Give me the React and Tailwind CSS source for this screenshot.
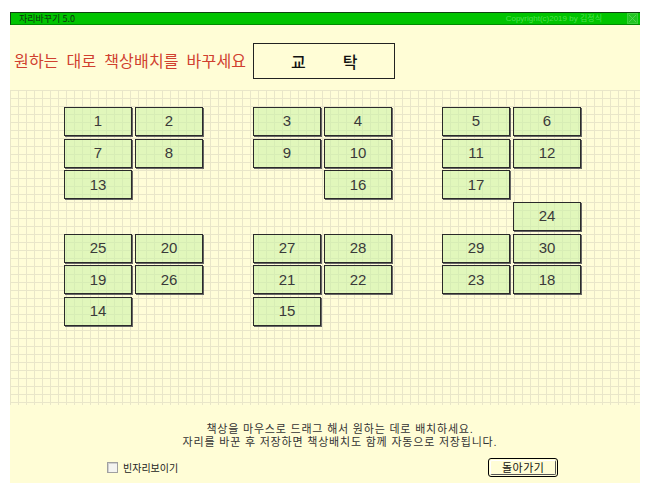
import React, { useState } from "react";

const groups = [
  [
    { n: 1, c: "col-start-1", r: "row-start-1" },
    { n: 2, c: "col-start-2", r: "row-start-1" },
    { n: 7, c: "col-start-1", r: "row-start-2" },
    { n: 8, c: "col-start-2", r: "row-start-2" },
    { n: 13, c: "col-start-1", r: "row-start-3" },
    { n: 25, c: "col-start-1", r: "row-start-5" },
    { n: 20, c: "col-start-2", r: "row-start-5" },
    { n: 19, c: "col-start-1", r: "row-start-6" },
    { n: 26, c: "col-start-2", r: "row-start-6" },
    { n: 14, c: "col-start-1", r: "row-start-7" },
  ],
  [
    { n: 3, c: "col-start-1", r: "row-start-1" },
    { n: 4, c: "col-start-2", r: "row-start-1" },
    { n: 9, c: "col-start-1", r: "row-start-2" },
    { n: 10, c: "col-start-2", r: "row-start-2" },
    { n: 16, c: "col-start-2", r: "row-start-3" },
    { n: 27, c: "col-start-1", r: "row-start-5" },
    { n: 28, c: "col-start-2", r: "row-start-5" },
    { n: 21, c: "col-start-1", r: "row-start-6" },
    { n: 22, c: "col-start-2", r: "row-start-6" },
    { n: 15, c: "col-start-1", r: "row-start-7" },
  ],
  [
    { n: 5, c: "col-start-1", r: "row-start-1" },
    { n: 6, c: "col-start-2", r: "row-start-1" },
    { n: 11, c: "col-start-1", r: "row-start-2" },
    { n: 12, c: "col-start-2", r: "row-start-2" },
    { n: 17, c: "col-start-1", r: "row-start-3" },
    { n: 24, c: "col-start-2", r: "row-start-4" },
    { n: 29, c: "col-start-1", r: "row-start-5" },
    { n: 30, c: "col-start-2", r: "row-start-5" },
    { n: 23, c: "col-start-1", r: "row-start-6" },
    { n: 18, c: "col-start-2", r: "row-start-6" },
  ],
];

function Desk({ desk }) {
  return (
    <div
      className={`${desk.c} ${desk.r} flex items-center justify-center border border-[#2a2a2a] shadow-[1px_1px_0_#666] bg-[#c8f2a4]/55 text-[15px] font-normal text-[#3a3a3a] font-['Liberation_Sans',sans-serif]`}
    >
      {desk.n}
    </div>
  );
}

export default function App() {
  const [showEmpty, setShowEmpty] = useState(false);

  return (
    <div className="w-[656px] h-[502px] bg-white pt-[12px] pl-[10px] font-['Noto_Sans_CJK_KR',sans-serif]">
      <div className="w-[630px] h-[471px] bg-[#fffdd6] flex flex-col">
        {/* title bar */}
        <div className="h-[13px] bg-[#00c400] border-t border-l border-[#104010] border-b border-b-[#008a00] flex items-center pl-[8px] pr-[2px]">
          <span className="text-[9px] leading-none text-[#103010]">자리바꾸기 5.0</span>
          <span className="ml-auto text-[8px] leading-none text-[#4ee24e] font-['Liberation_Sans','Noto_Sans_CJK_KR',sans-serif]">
            Copyright(c)2019 by 김정식
          </span>
          <div className="ml-[25px] w-[11px] h-[11px] border border-[#3ccf3c] bg-[#22c522] overflow-hidden">
            <svg viewBox="0 0 11 11" className="w-full h-full">
              <path d="M1 1L10 10M10 1L1 10" stroke="#5ad85a" strokeWidth="1" />
            </svg>
          </div>
        </div>

        {/* header */}
        <div className="h-[65px] flex items-start">
          <h1 className="mt-[27px] ml-[4px] text-[16px] leading-none tracking-[0.2px] [word-spacing:4px] text-[#d0402f]">
            원하는 대로 책상배치를 바꾸세요
          </h1>
          <div className="mt-[18px] ml-[7px] w-[142px] h-[36px] border border-[#222] flex items-center justify-center gap-[37px] text-[16px] text-[#111] font-medium">
            <span>교</span>
            <span>탁</span>
          </div>
        </div>

        {/* classroom grid */}
        <div className="h-[315px] pt-[17px] pl-[54px] flex gap-x-[50px] bg-[linear-gradient(to_right,#e9e6c9_1px,transparent_1px),linear-gradient(to_bottom,#e9e6c9_1px,transparent_1px)] bg-[length:8px_8px] bg-[#fffdd8]">
          {groups.map((g, i) => (
            <div key={i} className="grid grid-cols-[68px_68px] grid-rows-[repeat(7,29px)] gap-x-[3px] gap-y-[2.67px]">
              {g.map((d) => (
                <Desk key={d.n} desk={d} />
              ))}
            </div>
          ))}
        </div>

        {/* footer */}
        <div className="flex-1 flex flex-col">
          <div className="pt-[18px] pl-[30px] flex flex-col items-center text-[11px] leading-[12.6px] tracking-[0.8px] text-[#333] font-['Liberation_Sans','Noto_Sans_CJK_KR',sans-serif]">
            <p>책상을 마우스로 드래그 해서 원하는 데로 배치하세요.</p>
            <p>자리를 바꾼 후 저장하면 책상배치도 함께 자동으로 저장됩니다.</p>
          </div>
          <div className="mt-[10px] flex items-center">
            <label className="ml-[97px] flex items-center gap-[5px] text-[10px] text-[#222] cursor-pointer">
              <span
                onClick={() => setShowEmpty(!showEmpty)}
                className="w-[11px] h-[11px] border border-[#a0a0a0] bg-[#f4f4f0] shadow-[inset_1px_1px_0_#d0d0d0] flex items-center justify-center text-[9px] leading-none"
              >
                {showEmpty ? "✓" : ""}
              </span>
              빈자리보이기
            </label>
            <button className="ml-[310px] w-[70px] h-[19px] rounded-[3px] border border-black bg-[#fffdd6] p-[1px]">
              <div className="w-full h-full rounded-[2px] border border-t-white border-l-white border-r-[#555] border-b-[#555] flex items-center justify-center text-[11px] leading-none text-[#111] tracking-[0.5px]">
                돌아가기
              </div>
            </button>
          </div>
        </div>
      </div>
    </div>
  );
}
